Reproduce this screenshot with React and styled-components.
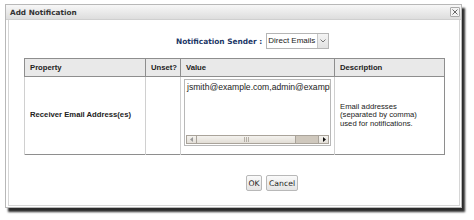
import styled, { createGlobalStyle } from 'styled-components';

const Global = createGlobalStyle`
  html, body {
    margin: 0;
    background: #fff;
  }
  * {
    box-sizing: border-box;
  }
`;

const Page = styled.div`
  padding: 4px 0 0 5px;
  height: 220px;
`;

const Dialog = styled.div`
  width: 457px;
  height: 204px;
  border: 1px solid #b8b8b8;
  background: #fff;
  box-shadow: 3px 4px 2px #2b2b2b;
  display: flex;
  flex-direction: column;
`;

const TitleBar = styled.div`
  height: 15px;
  padding: 0 1px 0 4px;
  background: linear-gradient(#f7f7f7, #dddddd);
  border-bottom: 1px solid #cfcfcf;
  display: flex;
  align-items: center;
  justify-content: space-between;
  font: bold 7.3px "DejaVu Sans", sans-serif;
  color: #333;
`;

const Close = styled.div`
  width: 10px;
  height: 10px;
  border: 1px solid #aaa;
  border-radius: 1px;
  background: #f3f3f3;
  display: flex;
  align-items: center;
  justify-content: center;
`;

const Content = styled.div`
  flex: 1;
  margin: 0 1px 1px 2px;
  border: 1px solid #d6d6d6;
  border-top: none;
  display: flex;
  flex-direction: column;
`;

const SenderRow = styled.div`
  margin: 13px 0 0 167px;
  display: flex;
  align-items: center;
  gap: 4px;
`;

const SenderLabel = styled.span`
  font: bold 7.4px "DejaVu Sans", sans-serif;
  color: #1c3767;
`;

const Select = styled.div`
  width: 63px;
  height: 16px;
  border: 1px solid #b5b5b5;
  display: flex;
  background: #fff;
`;

const SelectText = styled.span`
  flex: 1;
  padding-left: 1px;
  font: 8px "Liberation Sans", Arial, sans-serif;
  line-height: 13px;
  color: #222;
  white-space: nowrap;
`;

const SelectArrow = styled.span`
  width: 11px;
  border-left: 1px solid #c8c8c8;
  background: linear-gradient(#f4f4f4, #e2e2e2);
  display: flex;
  align-items: center;
  justify-content: center;
`;

const Table = styled.table`
  margin: 9px 0 0 15px;
  width: 420px;
  border-collapse: collapse;
  table-layout: fixed;
  border: 1px solid #8e8e8e;
`;

const Th = styled.th`
  height: 18px;
  padding: 0 5px;
  text-align: left;
  background: #e9e9e9;
  border: 1px solid #8e8e8e;
  font: bold 7.7px "Liberation Sans", Arial, sans-serif;
  color: #222;
`;

const Td = styled.td`
  height: 78px;
  padding: ${({ $pad }) => $pad || '0 5px'};
  vertical-align: ${({ $top }) => ($top ? 'top' : 'middle')};
  border-left: 1px solid #d0d0d0;
  font: ${({ $bold }) => ($bold ? 'bold 7.7px' : '7.7px')} "Liberation Sans", Arial, sans-serif;
  line-height: 8.4px;
  color: #222;
`;

const TextBox = styled.div`
  width: 147px;
  height: 67px;
  border: 1px solid #b8b8b8;
  display: flex;
  flex-direction: column;
  background: #fff;
`;

const TextLine = styled.div`
  flex: 1;
  padding: 2px 0 0 2px;
  font: 8.6px "Liberation Sans", Arial, sans-serif;
  line-height: 10px;
  color: #222;
  white-space: nowrap;
  overflow: hidden;
`;

const Scrollbar = styled.div`
  height: 9px;
  margin: 0 1px 1px 1px;
  display: flex;
  border: 1px solid #a9a39a;
  background: #cfc8bd;
`;

const ArrowBtn = styled.div`
  width: 10px;
  background: linear-gradient(#f5f3ef, #e3dfd8);
  border-${({ $side }) => ($side === 'left' ? 'right' : 'left')}: 1px solid #a9a39a;
  display: flex;
  align-items: center;
  justify-content: center;
`;

const Thumb = styled.div`
  width: 99px;
  background: linear-gradient(#f4f2ee, #e2ded6);
  border-right: 1px solid #a9a39a;
  display: flex;
  align-items: center;
  justify-content: center;
`;

const Track = styled.div`
  flex: 1;
`;

const Buttons = styled.div`
  margin: 20px 0 0 237px;
  display: flex;
  gap: 4px;
`;

const Button = styled.button`
  height: 16px;
  width: ${({ $w }) => $w}px;
  padding: 0;
  border: 1px solid #b8b8b8;
  border-radius: 2px;
  background: linear-gradient(#fafafa, #e4e4e4);
  font: 7.7px "DejaVu Sans", sans-serif;
  color: #222;
`;

const Tri = ({ dir, color }) => (
  <svg width="4" height="5" viewBox="0 0 4 5">
    <path d={dir === 'left' ? 'M3 0 L0 2.5 L3 5 Z' : 'M1 0 L4 2.5 L1 5 Z'} fill={color} />
  </svg>
);

export default function App() {
  return (
    <Page>
      <Global />
      <Dialog>
        <TitleBar>
          <span>Add Notification</span>
          <Close>
            <svg width="6" height="6" viewBox="0 0 6 6">
              <path d="M0.5 0.5 L5.5 5.5 M5.5 0.5 L0.5 5.5" stroke="#666" strokeWidth="1" />
            </svg>
          </Close>
        </TitleBar>
        <Content>
          <SenderRow>
            <SenderLabel>Notification Sender :</SenderLabel>
            <Select>
              <SelectText>Direct Emails</SelectText>
              <SelectArrow>
                <svg width="6" height="4" viewBox="0 0 6 4">
                  <path d="M0.5 0.5 L3 3 L5.5 0.5" stroke="#777" strokeWidth="1" fill="none" />
                </svg>
              </SelectArrow>
            </Select>
          </SenderRow>
          <Table>
            <colgroup>
              <col style={{ width: 121 }} />
              <col style={{ width: 35 }} />
              <col style={{ width: 154 }} />
              <col style={{ width: 110 }} />
            </colgroup>
            <thead>
              <tr>
                <Th>Property</Th>
                <Th>Unset?</Th>
                <Th>Value</Th>
                <Th>Description</Th>
              </tr>
            </thead>
            <tbody>
              <tr>
                <Td $bold>Receiver Email Address(es)</Td>
                <Td />
                <Td $top $pad="2px 0 0 3px">
                  <TextBox>
                    <TextLine>jsmith@example.com,admin@example.com</TextLine>
                    <Scrollbar>
                      <ArrowBtn $side="left">
                        <Tri dir="left" color="#999" />
                      </ArrowBtn>
                      <Thumb>
                        <svg width="5" height="5" viewBox="0 0 5 5">
                          <path d="M0.5 0 V5 M2.5 0 V5 M4.5 0 V5" stroke="#b5afa6" strokeWidth="1" />
                        </svg>
                      </Thumb>
                      <Track />
                      <ArrowBtn $side="right">
                        <Tri dir="right" color="#111" />
                      </ArrowBtn>
                    </Scrollbar>
                  </TextBox>
                </Td>
                <Td>
                  Email addresses
                  <br />
                  (separated by comma)
                  <br />
                  used for notifications.
                </Td>
              </tr>
            </tbody>
          </Table>
          <Buttons>
            <Button $w={16}>OK</Button>
            <Button $w={32}>Cancel</Button>
          </Buttons>
        </Content>
      </Dialog>
    </Page>
  );
}
